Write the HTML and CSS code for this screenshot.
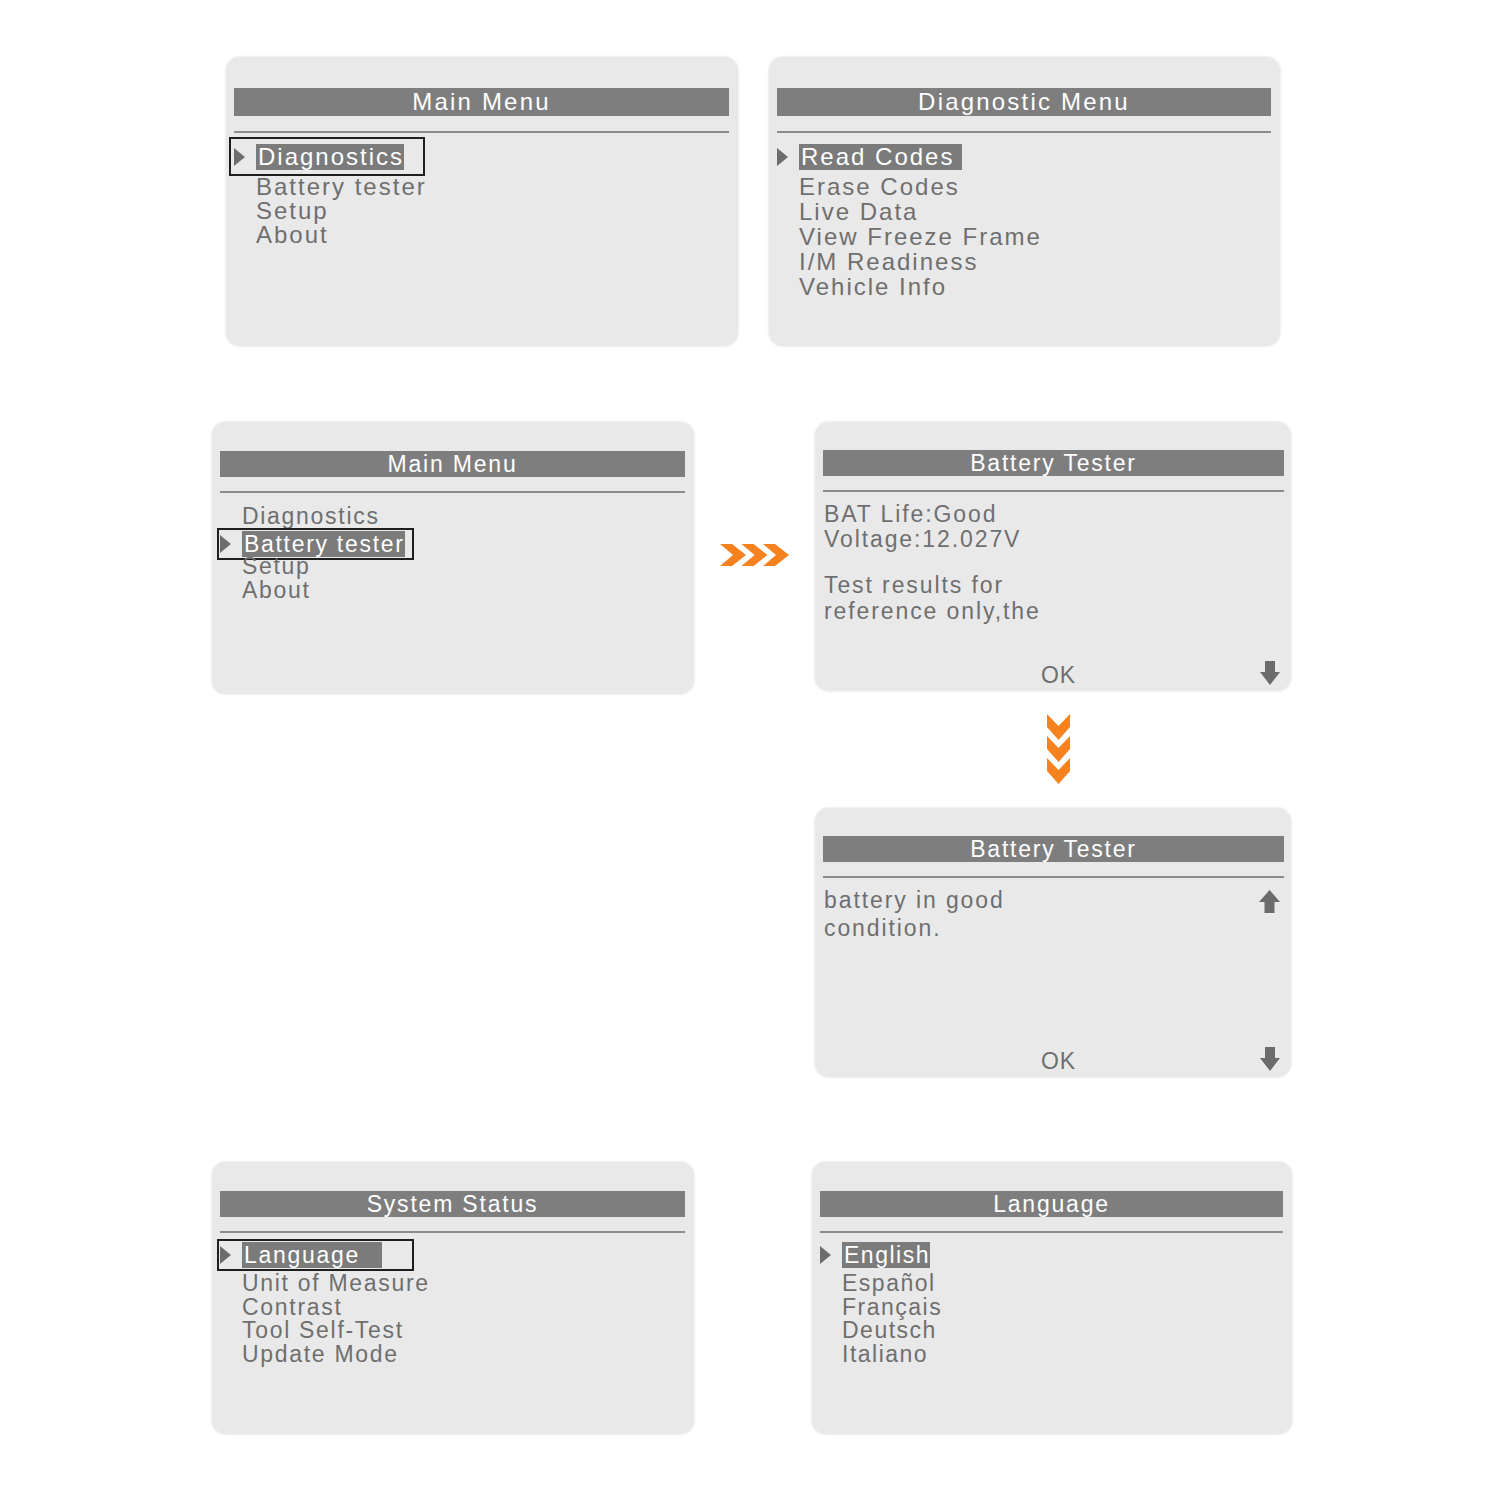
FILE: index.html
```html
<!DOCTYPE html>
<html lang="en">
<head>
<meta charset="utf-8">
<title>Scanner Menu Screens</title>
<link rel="stylesheet" href="styles.css">
</head>
<body>
<main class="sheet">

  <section class="row row-1">
    <div class="screen screen-lg s-main">
      <h2 class="bar">Main Menu</h2>
      <hr class="rule">
      <ul class="menu menu-main">
        <li class="item sel boxed"><span class="tri"></span><span class="lbl">Diagnostics</span><span class="frame"></span></li>
        <li class="item">Battery tester</li>
        <li class="item">Setup</li>
        <li class="item">About</li>
      </ul>
    </div>

    <div class="screen screen-lg s-diag">
      <h2 class="bar">Diagnostic Menu</h2>
      <hr class="rule">
      <ul class="menu menu-diag">
        <li class="item sel"><span class="tri"></span><span class="lbl pad-m">Read Codes</span></li>
        <li class="item">Erase Codes</li>
        <li class="item">Live Data</li>
        <li class="item">View Freeze Frame</li>
        <li class="item">I/M Readiness</li>
        <li class="item">Vehicle Info</li>
      </ul>
    </div>
  </section>

  <section class="row row-2">
    <div class="screen screen-sm s-mid">
      <h2 class="bar">Main Menu</h2>
      <hr class="rule">
      <ul class="menu menu-mid">
        <li class="item">Diagnostics</li>
        <li class="item sel boxed"><span class="tri"></span><span class="lbl">Battery tester</span><span class="frame"></span></li>
        <li class="item item-tight">Setup</li>
        <li class="item item-last">About</li>
      </ul>
    </div>

    <div class="flow-right">
      <svg width="70" height="22" viewBox="0 0 70 22" aria-hidden="true">
        <polygon class="chev" points="0,0 12,0 26,11 12,22 0,22 13,11"/>
        <polygon class="chev" points="21.5,0 33.5,0 47.5,11 33.5,22 21.5,22 34.5,11"/>
        <polygon class="chev" points="43,0 55,0 69,11 55,22 43,22 56,11"/>
      </svg>
    </div>

    <div class="stack">
      <div class="screen screen-sm s-bat">
        <h2 class="bar">Battery Tester</h2>
        <hr class="rule">
        <div class="msg msg-result">
          <p>BAT Life:Good</p>
          <p>Voltage:12.027V</p>
          <p class="gap">Test results for</p>
          <p class="last">reference only,the</p>
        </div>
        <div class="foot">
          <span class="ok">OK</span>
          <svg class="scroll" width="20" height="24" viewBox="0 0 20 24" aria-hidden="true">
            <polygon points="5,0 15,0 15,11 20,11 10,24 0,11 5,11"/>
          </svg>
        </div>
      </div>

      <div class="flow-down">
        <svg width="23" height="70" viewBox="0 0 23 70" aria-hidden="true">
          <polygon class="chev" points="0,0 11.5,12 23,0 23,13 11.5,26 0,13"/>
          <polygon class="chev" points="0,22 11.5,34 23,22 23,35 11.5,48 0,35"/>
          <polygon class="chev" points="0,44 11.5,56 23,44 23,57 11.5,70 0,57"/>
        </svg>
      </div>

      <div class="screen screen-sm s-bat">
        <h2 class="bar">Battery Tester</h2>
        <hr class="rule">
        <div class="msg msg-cond">
          <div class="msg-text">
            <p>battery in good</p>
            <p>condition.</p>
          </div>
          <svg class="scroll scroll-up" width="21" height="23" viewBox="0 0 21 23" aria-hidden="true">
            <polygon points="10.5,0 21,12 15.5,12 15.5,23 5.5,23 5.5,12 0,12"/>
          </svg>
        </div>
        <div class="foot">
          <span class="ok">OK</span>
          <svg class="scroll" width="20" height="24" viewBox="0 0 20 24" aria-hidden="true">
            <polygon points="5,0 15,0 15,11 20,11 10,24 0,11 5,11"/>
          </svg>
        </div>
      </div>
    </div>
  </section>

  <section class="row row-3">
    <div class="screen screen-sm s-sys">
      <h2 class="bar">System Status</h2>
      <hr class="rule">
      <ul class="menu menu-list">
        <li class="item sel boxed"><span class="tri"></span><span class="lbl pad-l">Language</span><span class="frame"></span></li>
        <li class="item">Unit of Measure</li>
        <li class="item">Contrast</li>
        <li class="item">Tool Self-Test</li>
        <li class="item">Update Mode</li>
      </ul>
    </div>

    <div class="screen screen-sm s-lang">
      <h2 class="bar">Language</h2>
      <hr class="rule">
      <ul class="menu menu-list menu-lang">
        <li class="item sel"><span class="tri"></span><span class="lbl">English</span></li>
        <li class="item">Español</li>
        <li class="item">Français</li>
        <li class="item">Deutsch</li>
        <li class="item">Italiano</li>
      </ul>
    </div>
  </section>

</main>
</body>
</html>
```

FILE: styles.css
```css
* {
  box-sizing: border-box;
  margin: 0;
  padding: 0;
}

body {
  background: #ffffff;
  font-family: "Liberation Sans", Arial, sans-serif;
  color: #6f6f6f;
}

.sheet {
  width: 1500px;
  height: 1500px;
}

/* ---------- rows of screens ---------- */
.row {
  display: flex;
  align-items: flex-start;
}

.row-1 {
  padding: 57px 0 0 226px;
  gap: 31px;
}

.row-2 {
  padding: 76px 0 0 212px;
}

.row-3 {
  padding: 85px 0 0 212px;
  gap: 118px;
}

/* ---------- LCD screen card ---------- */
.screen {
  --fs: 23px;
  --ls: 1.7px;
  --bar-h: 26px;
  --bar-top: 29px;
  --rule-top: 14px;
  background: #e9e9e9;
  border-radius: 14px;
  box-shadow: 0 0 2px 1px rgba(0, 0, 0, 0.07);
  display: flex;
  flex-direction: column;
  padding: 0 9px 0 8px;
  font-size: var(--fs);
  letter-spacing: var(--ls);
}

.screen-lg {
  --fs: 24px;
  --ls: 2px;
  --bar-h: 28px;
  --bar-top: 31px;
  --rule-top: 15px;
  height: 289px;
}

.s-main { width: 512px; }
.s-diag { width: 511px; }
.s-mid  { width: 482px; height: 272px; }
.s-sys  { width: 482px; height: 272px; }
.s-lang { width: 480px; height: 272px; }
.s-bat  { width: 476px; height: 269px; --bar-top: 28px; padding-right: 7px; }

.bar {
  margin-top: var(--bar-top);
  height: var(--bar-h);
  line-height: var(--bar-h);
  background: #7e7e7e;
  color: #ffffff;
  text-align: center;
  font-size: var(--fs);
  font-weight: normal;
  letter-spacing: 2.2px;
}

.screen-sm .bar {
  letter-spacing: 1.8px;
}

.rule {
  border: 0;
  height: 2px;
  background: #8b8b8b;
  margin-top: var(--rule-top);
}

/* ---------- menu lists ---------- */
.menu {
  list-style: none;
}

.item {
  position: relative;
  padding-left: 22px;
  white-space: nowrap;
}

.item.sel {
  display: flex;
  align-items: center;
  height: 26px;
  padding-left: 0;
}

.tri {
  width: 22px;
  flex: none;
  height: 18px;
  position: relative;
}

.tri::before {
  content: "";
  position: absolute;
  left: 0;
  top: 0;
  border-style: solid;
  border-width: 9px 0 9px 11px;
  border-color: transparent transparent transparent #6c6c6c;
}

.lbl {
  background: #7b7b7b;
  color: #ffffff;
  line-height: 26px;
  height: 26px;
  padding: 0 0 0 2px;
}

.lbl.pad-m { padding-right: 8px; }
.lbl.pad-l { padding-right: 22px; }

/* black selection frame drawn over the highlighted row */
.frame {
  position: absolute;
  top: -3px;
  bottom: -3px;
  left: -3px;
  width: 197px;
  border: 2px solid #1e1e1e;
}

/* top Main Menu */
.menu-main {
  margin-top: 11px;
  line-height: 24px;
}
.menu-main .sel { margin-bottom: 5px; }
.menu-main .frame {
  top: -7px;
  bottom: -6px;
  left: -5px;
  width: 196px;
}

/* Diagnostic Menu */
.menu-diag {
  margin-top: 11px;
  line-height: 25px;
}
.menu-diag .sel { margin-bottom: 4px; }

/* middle Main Menu */
.menu-mid {
  margin-top: 12px;
  line-height: 23px;
}
.menu-mid .sel { margin-top: 3px; }
.menu-mid .item-tight { margin-top: -2px; }
.menu-mid .item-last { margin-top: 1px; }

/* System Status / Language */
.menu-list {
  margin-top: 9px;
  line-height: 23.5px;
}
.menu-list .sel { margin-bottom: 4px; }
.menu-lang { letter-spacing: 1.5px; }

/* ---------- battery tester messages ---------- */
.msg {
  padding-left: 1px;
  letter-spacing: 1.9px;
}

.msg-result {
  margin-top: 10px;
  line-height: 25px;
}

.msg-result .gap {
  margin-top: 21px;
}

.msg-result .last {
  margin-top: 1px;
}

.msg-cond {
  display: flex;
  justify-content: space-between;
  align-items: flex-start;
  margin-top: 8px;
  line-height: 28px;
}

.scroll {
  fill: #6b6b6b;
  display: block;
}

.scroll-up {
  margin-top: 4px;
  margin-right: 4px;
}

.foot {
  margin-top: auto;
  display: grid;
  grid-template-columns: 1fr auto 1fr;
  align-items: start;
  height: 28px;
  margin-bottom: 2px;
}

.ok {
  grid-column: 2;
  line-height: 28px;
  margin-left: 10px;
  letter-spacing: 1px;
}

.foot .scroll {
  grid-column: 3;
  justify-self: end;
  margin-right: 4px;
}

/* ---------- orange flow arrows ---------- */
.chev {
  fill: #f5821f;
}

.flow-right {
  width: 121px;
  padding-top: 122px;
  display: flex;
  justify-content: center;
}

.stack {
  width: 476px;
  display: flex;
  flex-direction: column;
}

.flow-down {
  margin: 23px 0 24px 232px;
  height: 70px;
}

.flow-down svg {
  display: block;
}
```
